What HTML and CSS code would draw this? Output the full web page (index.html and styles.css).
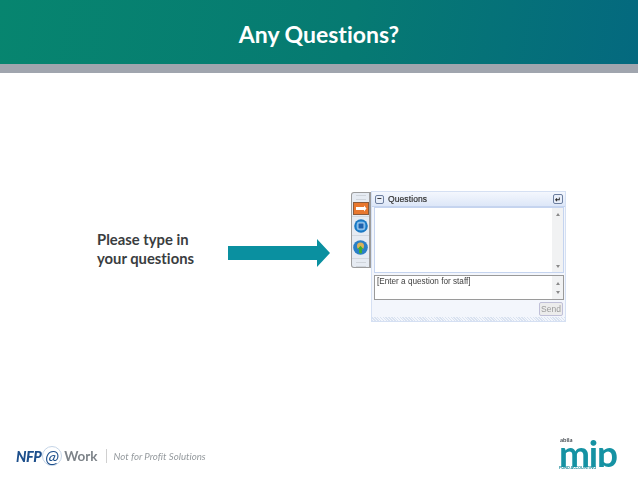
FILE: index.html
```html
<!DOCTYPE html>
<html lang="en">
<head>
<meta charset="utf-8">
<title>Any Questions?</title>
<link rel="stylesheet" href="styles.css">
</head>
<body>
<div class="slide">
  <header class="title-bar"><h1>Any Questions?</h1></header>
  <div class="rule"></div>
  <main class="content">
    <p class="prompt">Please type in<br>your questions</p>
    <svg class="arrow" width="102" height="28" viewBox="0 0 102 28"><path d="M0 7H89V0L102 14L89 28V21H0Z" fill="#0a90a0"/></svg>
    <div class="widget">
      <div class="rail">
        <div class="grip"></div>
        <div class="rail-btn active"><svg width="16" height="13" viewBox="0 0 16 13"><rect width="16" height="13" fill="#8a5a3a"/><rect x="1" y="1" width="14" height="11" fill="#e8772e"/><rect x="3" y="5" width="8" height="3" fill="#fff"/><path d="M11 3.500l2.500 3-2.500 3z" fill="#fff"/></svg></div>
        <div class="rail-btn"><svg width="14" height="14" viewBox="0 0 16 16"><circle cx="8" cy="8" r="7.800" fill="#1b78c2"/><circle cx="8" cy="8" r="5.800" fill="#3d9be0"/><rect x="4.500" y="4.500" width="7" height="7" fill="#1d62ad" stroke="#cfe6fa" stroke-width="1"/></svg></div>
        <div class="rail-btn tall"><svg width="15" height="15" viewBox="0 0 16 16"><circle cx="8" cy="8" r="7.800" fill="#2a7fc6"/><circle cx="8" cy="6.500" r="3.800" fill="#d9b25a"/><path d="M8 6l3 3.500H9.500V14h-3V9.500H5z" fill="#3fb02e"/></svg></div>
        <div class="grip low"></div>
      </div>
      <div class="panel">
        <div class="panel-head">
          <span class="tool">&#8722;</span>
          <span class="panel-title">Questions</span>
          <span class="tool end">&#8629;</span>
        </div>
        <div class="log">
          <div class="log-area"></div>
          <div class="scroll"><span class="up"></span><span class="down"></span></div>
        </div>
        <div class="entry">
          <div class="entry-text">[Enter a question for staff]</div>
          <div class="scroll"><span class="up"></span><span class="down"></span></div>
        </div>
        <div class="actions"><span class="send">Send</span></div>
        <div class="hatch"></div>
      </div>
    </div>
  </main>
  <footer class="footer">
    <div class="brand">
      <span class="nfp">NFP</span>
      <span class="at">@</span>
      <span class="work">Work</span>
      <span class="divider"></span>
      <span class="tagline">Not for Profit Solutions</span>
    </div>
    <div class="mip">
      <span class="abila">abila</span>
      <span class="mip-word">mip</span>
      <span class="fund">FUND ACCOUNTING</span>
    </div>
  </footer>
</div>
</body>
</html>
```
FILE: styles.css
```css
* { box-sizing: border-box; }
html, body { margin: 0; padding: 0; background: #fff; }
.slide {
  width: 638px;
  height: 478px;
  display: flex;
  flex-direction: column;
  overflow: hidden;
  font-family: "Lato", "Open Sans", sans-serif;
  font-variant-ligatures: none;
}
.title-bar {
  height: 64px;
  flex: none;
  display: flex;
  align-items: center;
  justify-content: center;
  padding-top: 4px;
  background: linear-gradient(100deg, #07856f 0%, #067a72 55%, #04697f 100%);
}
.title-bar h1 {
  margin: 0;
  color: #fff;
  font-size: 23px;
  font-weight: 700;
  line-height: 30px;
}
.rule { height: 9px; flex: none; background: #a0a5ae; }
.content {
  flex: 1;
  display: flex;
  align-items: flex-start;
  padding: 118px 0 0 97px;
}
.prompt {
  width: 131px;
  margin: 39px 0 0;
  color: #3a3d40;
  font-size: 14.800px;
  font-weight: 700;
  line-height: 19px;
}
.arrow { flex: none; margin: 48px 0 0; }
.widget {
  margin-left: 21px;
  display: flex;
  align-items: flex-start;
  font-family: "Liberation Sans", sans-serif;
  filter: blur(0.4px);
}
.rail {
  width: 20px;
  height: 76px;
  margin-top: 1px;
  display: flex;
  flex-direction: column;
  align-items: center;
  background: #e6ebf2;
  border: 1px solid #9c9c9c;
  border-right: 2px solid #9c9c9c;
  border-radius: 3px 0 0 3px;
}
.grip { height: 5px; width: 10px; margin-top: 2px; border-top: 1px solid #cfd4da; border-bottom: 1px solid #cfd4da; }
.grip.low { margin-top: 3px; }
.rail-btn {
  height: 19px;
  width: 100%;
  display: flex;
  align-items: center;
  justify-content: center;
  border-bottom: 1px solid #d3d8df;
}
.rail-btn.active { height: 17px; }
.rail-btn.tall { height: 23px; }
.panel {
  width: 195px;
  height: 131px;
  display: flex;
  flex-direction: column;
  background: #f3f6fc;
  border: 1px solid #d5e0f3;
}
.panel-head {
  height: 15px;
  flex: none;
  display: flex;
  align-items: center;
  gap: 4px;
  padding: 0 2px 0 3px;
  background: linear-gradient(#f4f7fd, #dde7f8);
  border-bottom: 1px solid #c5d4ef;
}
.tool {
  width: 9px;
  height: 9px;
  display: flex;
  align-items: center;
  justify-content: center;
  background: #e8eef9;
  border: 1px solid #6d7f9f;
  border-radius: 2px;
  color: #222;
  font-size: 8px;
  font-weight: 700;
  line-height: 1;
}
.tool.end { margin-left: auto; width: 10px; height: 10px; font-size: 7px; }
.panel-title { color: #333; font-size: 8.500px; font-weight: 400; letter-spacing: 0.100px; -webkit-text-stroke: 0.200px #333; }
.log {
  height: 66px;
  flex: none;
  margin: 0 1px 0 2px;
  display: flex;
  background: #fff;
  border: 1px solid #c5d4ef;
}
.log-area { flex: 1; }
.scroll {
  width: 11px;
  display: flex;
  flex-direction: column;
  justify-content: space-between;
  align-items: center;
  padding: 5px 0 4px;
  background: #f1f2f3;
}
.entry .scroll { padding: 6px 0 5px; }
.up { border: 2.500px solid transparent; border-top: 0; border-bottom: 3px solid #8a8a8a; }
.down { border: 2.500px solid transparent; border-bottom: 0; border-top: 3px solid #8a8a8a; }
.entry {
  height: 25px;
  flex: none;
  margin: 2px 1px 0 2px;
  display: flex;
  background: #fff;
  border: 1px solid #9a9a9a;
}
.entry-text {
  flex: 1;
  padding: 1px 0 0 2px;
  color: #404040;
  font-size: 8.200px;
  line-height: 10px;
}
.actions {
  flex: 1;
  display: flex;
  justify-content: flex-end;
  align-items: flex-start;
  padding: 2px 2px 0 0;
}
.send {
  width: 24px;
  height: 14px;
  display: flex;
  align-items: center;
  justify-content: center;
  color: #9a9a9a;
  font-size: 8.500px;
  background: #ececec;
  border: 1px solid #c0c0d8;
  border-radius: 2px;
}
.hatch {
  height: 4px;
  flex: none;
  background: repeating-linear-gradient(45deg, #d9e2f0 0 1px, #f3f6fc 1px 2px);
}
.footer {
  height: 43px;
  flex: none;
  display: flex;
  justify-content: space-between;
  align-items: flex-start;
  padding: 0 23px 0 16px;
}
.brand { display: flex; align-items: center; height: 26px; margin-top: 8px; filter: blur(0.3px); }
.nfp {
  color: #1d4f8c;
  font-size: 14.500px;
  font-weight: 900;
  font-style: italic;
  letter-spacing: -0.500px;
}
.at {
  width: 20px;
  height: 20px;
  margin: 0 0 0 1px;
  display: flex;
  align-items: center;
  justify-content: center;
  color: #1d4f8c;
  background: #fff;
  border: 1px solid #c4d4e6;
  border-radius: 50%;
  font-size: 18px;
  font-style: italic;
  line-height: 1;
}
.work { margin-left: 2px; color: #7d8389; font-size: 13.500px; font-weight: 700; }
.divider { width: 1px; height: 14px; margin: 0 7px 0 8px; background: #d0d0d0; }
.tagline { color: #959a9e; font-size: 9.700px; font-style: italic; }
.mip {
  width: 56px;
  height: 34px;
  margin-top: 1px;
  display: flex;
  flex-direction: column;
  filter: blur(0.3px);
}
.abila { height: 7px; padding-left: 1px; color: #4a4f55; font-size: 6px; font-weight: 700; line-height: 7px; }
.mip-word {
  height: 21px;
  color: #1592a3;
  font-size: 37px;
  font-weight: 700;
  line-height: 19px;
  letter-spacing: -1.200px;
  clip-path: inset(-10px -2px -3px 0);
}
.fund { height: 5px; margin-top: 1px; color: #0f8496; font-size: 3.800px; font-weight: 700; line-height: 5px; white-space: nowrap; }
```
